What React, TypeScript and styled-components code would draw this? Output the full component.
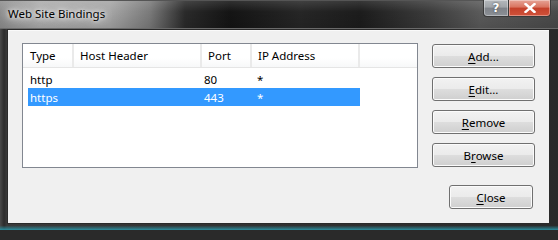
import styled, { createGlobalStyle, css } from "styled-components";

const GlobalStyle = createGlobalStyle`
  html, body {
    margin: 0;
    padding: 0;
    background: #2a2a2a;
  }
  body {
    font-family: "Segoe UI", "Noto Sans", "Open Sans", sans-serif;
    font-size: 11.5px;
  }
`;

type Column = { title: string; width: number };

const columns: Column[] = [
  { title: "Type", width: 51 },
  { title: "Host Header", width: 128 },
  { title: "Port", width: 50 },
  { title: "IP Address", width: 108 },
];

const bindings = [
  { type: "http", host: "", port: "80", ip: "*" },
  { type: "https", host: "", port: "443", ip: "*" },
];

const App = () => {
  return (
    <>
      <GlobalStyle />
      <S.Window>
        <S.TitleBar>
          <S.Title>Web Site Bindings</S.Title>
          <S.CaptionButtons>
            <S.CaptionButton $kind="help">?</S.CaptionButton>
            <S.CaptionButton $kind="close">
              <svg width="12" height="10" viewBox="0 0 12 10">
                <path
                  d="M1.5 1 L10.5 9 M10.5 1 L1.5 9"
                  stroke="#fff"
                  strokeWidth="2.4"
                  strokeLinecap="square"
                />
              </svg>
            </S.CaptionButton>
          </S.CaptionButtons>
        </S.TitleBar>

        <S.Client>
          <S.MainRow>
            <S.ListView>
              <S.Header>
                {columns.map((col) => (
                  <S.HeaderCell key={col.title} style={{ width: col.width }}>
                    {col.title}
                  </S.HeaderCell>
                ))}
              </S.Header>
              <S.Rows>
                {bindings.map((b, i) => (
                  <S.Row key={b.type} $selected={i === 1}>
                    <S.Cell style={{ width: columns[0].width - 5 }}>{b.type}</S.Cell>
                    <S.Cell style={{ width: columns[1].width }}>{b.host}</S.Cell>
                    <S.Cell style={{ width: columns[2].width }}>{b.port}</S.Cell>
                    <S.Cell style={{ width: columns[3].width }}>{b.ip}</S.Cell>
                  </S.Row>
                ))}
              </S.Rows>
            </S.ListView>

            <S.ButtonColumn>
              <S.Button>
                <u>A</u>dd...
              </S.Button>
              <S.Button>
                <u>E</u>dit...
              </S.Button>
              <S.Button>
                <u>R</u>emove
              </S.Button>
              <S.Button>
                B<u>r</u>owse
              </S.Button>
            </S.ButtonColumn>
          </S.MainRow>

          <S.Footer>
            <S.Button $width={84}>
              <u>C</u>lose
            </S.Button>
          </S.Footer>
        </S.Client>
      </S.Window>
    </>
  );
};

export default App;

const S = {
  Window: styled.div`
    width: 558px;
    height: 230px;
    box-sizing: border-box;
    display: flex;
    flex-direction: column;
    padding: 0 8px 6px 7px;
    background:
      linear-gradient(180deg, rgba(0, 0, 0, 0) 0%, rgba(0, 0, 0, 0) 98%, #2a8c9c 100%),
      linear-gradient(90deg, #4a4a4a 0px, #2c2c2c 4px, #3a3a3a 7px, #333 30%, #2a2a2a 100%);
    border-top: 1px solid #555;
  `,
  TitleBar: styled.div`
    height: 27px;
    margin: 0 -8px 0 -7px;
    padding-left: 8px;
    display: flex;
    align-items: flex-start;
    justify-content: space-between;
    background:
      linear-gradient(
        180deg,
        rgba(255, 255, 255, 0.12) 0%,
        rgba(255, 255, 255, 0) 40%,
        rgba(0, 0, 0, 0.1) 100%
      ),
      linear-gradient(
        90deg,
        #8e8e8e 0px,
        #acacac 40px,
        #a6a6a6 110px,
        #7a7a7a 150px,
        #2a2a2a 185px,
        #141414 230px,
        #262626 300px,
        #1c1c1c 360px,
        #3c3c3c 430px,
        #5a5a5a 480px,
        #4a4a4a 558px
      );
    border-bottom: 1px solid #6a6a6a;
  `,
  Title: styled.span`
    padding-top: 5px;
    color: #000;
    font-size: 11.5px;
    line-height: 16px;
    text-shadow:
      0 0 4px #fff,
      0 0 8px rgba(255, 255, 255, 0.9),
      0 0 14px rgba(255, 255, 255, 0.7);
  `,
  CaptionButtons: styled.div`
    display: flex;
    margin-right: 7px;
    margin-top: -1px;
  `,
  CaptionButton: styled.div<{ $kind: "help" | "close" }>`
    height: 17px;
    display: flex;
    align-items: center;
    justify-content: center;
    box-sizing: border-box;
    border: 1px solid #3a3a3a;
    border-top: none;
    color: #fff;
    font-family: "DejaVu Sans", sans-serif;
    font-weight: bold;
    font-size: 12px;
    text-shadow: 0 0 2px #333;
    box-shadow: inset 0 0 0 1px rgba(255, 255, 255, 0.35);
    ${(p) =>
      p.$kind === "help"
        ? css`
            width: 25px;
            border-bottom-left-radius: 4px;
            border-right: none;
            background: linear-gradient(180deg, #b4b8bc 0%, #a0a4a8 45%, #7e8288 50%, #8c9096 100%);
          `
        : css`
            width: 43px;
            border-bottom-right-radius: 4px;
            background: linear-gradient(180deg, #e6a497 0%, #d9735f 45%, #c4402a 50%, #d0523a 100%);
          `}
  `,
  Client: styled.div`
    flex: 1;
    display: flex;
    flex-direction: column;
    background: #f0f0f0;
    border: 1px solid #2a2a2a;
    box-shadow: inset 0 1px 0 #fafafa;
    padding: 13px 14px 0 14px;
  `,
  MainRow: styled.div`
    display: flex;
    gap: 14px;
  `,
  ListView: styled.div`
    width: 396px;
    height: 125px;
    box-sizing: border-box;
    border: 1px solid #828790;
    background: #fff;
    display: flex;
    flex-direction: column;
  `,
  Header: styled.div`
    height: 23px;
    display: flex;
    border-bottom: 1px solid #e5e5e5;
    background: linear-gradient(180deg, #ffffff 0%, #ffffff 60%, #f7f8f9 100%);
  `,
  HeaderCell: styled.div`
    box-sizing: border-box;
    padding-left: 6px;
    line-height: 23px;
    color: #000;
    border-right: 2px solid #eaeaea;
    white-space: nowrap;
    &:first-child {
      padding-left: 7px;
    }
  `,
  Rows: styled.div`
    padding: 2px 0 0 5px;
    display: flex;
    flex-direction: column;
  `,
  Row: styled.div<{ $selected?: boolean }>`
    height: 18px;
    width: 332px;
    display: flex;
    align-items: center;
    color: ${(p) => (p.$selected ? "#fff" : "#000")};
    background: ${(p) => (p.$selected ? "#3399ff" : "transparent")};
  `,
  Cell: styled.div`
    box-sizing: border-box;
    padding-left: 2px;
    white-space: nowrap;
    &:nth-child(4) {
      padding-left: 5px;
    }
  `,
  ButtonColumn: styled.div`
    display: flex;
    flex-direction: column;
    gap: 9px;
    padding-top: 1px;
  `,
  Button: styled.button<{ $width?: number }>`
    width: ${(p) => p.$width ?? 103}px;
    height: 24px;
    padding: 0;
    font-family: inherit;
    font-size: 11.5px;
    color: #000;
    border: 1px solid #707070;
    border-radius: 3px;
    background: linear-gradient(180deg, #f2f2f2 0%, #ebebeb 48%, #dddddd 52%, #cfcfcf 100%);
    box-shadow: inset 0 0 0 1px #fbfbfb;
    u {
      text-decoration: underline;
      text-underline-offset: 2px;
    }
  `,
  Footer: styled.div`
    display: flex;
    justify-content: flex-end;
    padding: 17px 2px 0 0;
  `,
};
